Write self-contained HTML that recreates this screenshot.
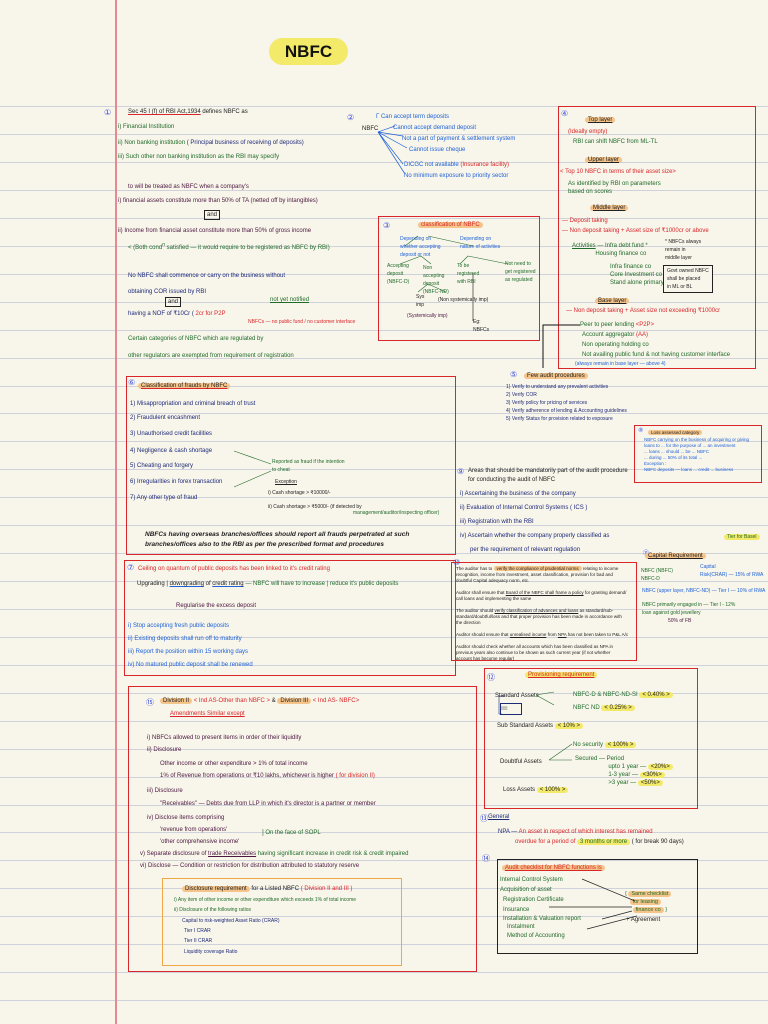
<!DOCTYPE html>
<html><head><meta charset="utf-8"><style>
html,body{margin:0;padding:0}
body{width:768px;height:1024px;position:relative;overflow:hidden;font-family:"Liberation Sans",sans-serif;background-color:#f8f5ea;}
.ln{position:absolute;left:0;width:768px;height:1px;background:#cfd1db}
.margin{position:absolute;left:115px;top:0;width:2px;height:1024px;background:#e58a93}
.pill{position:absolute;left:269px;top:38px;width:79px;height:27px;border-radius:14px;background:#f3ea6a;font-weight:bold;font-size:17px;text-align:center;line-height:27px;color:#111}
.t{position:absolute;font-size:6px;white-space:nowrap;line-height:8px}
.m{color:#4a1740}.g{color:#1f6b2a}.b{color:#1e62d8}.r{color:#d8262a}.n{color:#1d2a7a}.k{color:#222}
.box{position:absolute;border:1.5px solid #d8262a}
.hl{background:#f4c48a;border-radius:4px;padding:0 3px}
.hy{background:#f3ea6a;border-radius:4px;padding:0 3px}
.num{position:absolute;font-size:8px;color:#3b4fe0}
</style></head><body>
<div class="ln" style="top:106px"></div><div class="ln" style="top:134px"></div><div class="ln" style="top:162px"></div><div class="ln" style="top:190px"></div><div class="ln" style="top:218px"></div><div class="ln" style="top:246px"></div><div class="ln" style="top:274px"></div><div class="ln" style="top:302px"></div><div class="ln" style="top:330px"></div><div class="ln" style="top:358px"></div><div class="ln" style="top:386px"></div><div class="ln" style="top:413px"></div><div class="ln" style="top:441px"></div><div class="ln" style="top:469px"></div><div class="ln" style="top:497px"></div><div class="ln" style="top:525px"></div><div class="ln" style="top:553px"></div><div class="ln" style="top:581px"></div><div class="ln" style="top:609px"></div><div class="ln" style="top:637px"></div><div class="ln" style="top:665px"></div><div class="ln" style="top:693px"></div><div class="ln" style="top:721px"></div><div class="ln" style="top:749px"></div><div class="ln" style="top:777px"></div><div class="ln" style="top:805px"></div><div class="ln" style="top:832px"></div><div class="ln" style="top:860px"></div><div class="ln" style="top:888px"></div><div class="ln" style="top:916px"></div><div class="ln" style="top:944px"></div><div class="ln" style="top:972px"></div><div class="ln" style="top:1000px"></div>
<div class="margin"></div>
<div class="pill">NBFC</div>

<div class="num" style="left:104px;top:108px">①</div>
<div class="t k" style="left:128px;top:108px"><u style="text-decoration-color:#d8262a">Sec 45 I (f) of RBI Act,1934</u> defines NBFC as</div>
<div class="t g" style="left:118px;top:123px">i) Financial Institution</div>
<div class="t g" style="left:118px;top:139px">ii) Non banking institution <span class="n">( Principal business of receiving of deposits)</span></div>
<div class="t g" style="left:118px;top:153px">iii) Such other non banking institution as the RBI may specify</div>
<div class="t m" style="left:128px;top:183px">to will be treated as NBFC when a company's</div>
<div class="t m" style="left:118px;top:197px">i) financial assets constitute more than 50% of TA (netted off by intangibles)</div>
<div class="t k" style="left:204px;top:210px;border:1px solid #222;padding:0 2px">and</div>
<div class="t m" style="left:118px;top:227px">ii) Income from financial asset constitute more than 50% of gross income</div>
<div class="t g" style="left:128px;top:241px">&lt; (Both cond<sup>n</sup> satisfied — it would require to be registered as NBFC by RBI)</div>
<div class="t n" style="left:128px;top:272px">No NBFC shall commence or carry on the business without</div>
<div class="t n" style="left:128px;top:288px">obtaining COR issued by RBI</div>
<div class="t k" style="left:165px;top:297px;border:1px solid #222;padding:0 2px">and</div>
<div class="t g" style="left:270px;top:296px"><u>not yet notified</u></div>
<div class="t n" style="left:128px;top:310px">having a NOF of ₹10Cr ( <span class="r">2cr for P2P</span></div>
<div class="t r" style="left:248px;top:318px;font-size:5px">NBFCs — no public fund / no customer interface</div>
<div class="t g" style="left:128px;top:335px">Certain categories of NBFC which are regulated by</div>
<div class="t g" style="left:128px;top:352px">other regulators are exempted from requirement of registration</div>

<div class="num" style="left:347px;top:113px">②</div>
<div class="t b" style="left:376px;top:113px">Γ Can accept term deposits</div>
<div class="t k" style="left:362px;top:125px">NBFC</div>
<div class="t b" style="left:393px;top:124px">Cannot accept demand deposit</div>
<div class="t b" style="left:402px;top:135px">Not a part of payment &amp; settlement system</div>
<div class="t b" style="left:409px;top:146px">Cannot issue cheque</div>
<div class="t b" style="left:404px;top:161px">DICGC not available <span class="r">(Insurance facility)</span></div>
<div class="t b" style="left:404px;top:172px">No minimum exposure to priority sector</div>
<svg style="position:absolute;left:375px;top:120px" width="35" height="60"><g stroke="#1e62d8" stroke-width=".7" fill="none"><path d="M3 12 L20 6 M3 12 L28 16 M3 12 L32 28 M3 12 L28 44 M3 12 L30 54"/></g></svg>

<div class="box" style="left:378px;top:216px;width:160px;height:123px"></div>
<div class="num" style="left:383px;top:221px">③</div>
<div class="t r" style="left:418px;top:221px"><span class="hl">classification of NBFC</span></div>
<div class="t b" style="left:400px;top:235px;font-size:5px">Depending on<br>whether accepting<br>deposit or not</div>
<div class="t b" style="left:460px;top:235px;font-size:5px">Depending on<br>nature of activities</div>
<div class="t g" style="left:387px;top:262px;font-size:5px">Accepting<br>deposit<br>(NBFC-D)</div>
<div class="t g" style="left:423px;top:264px;font-size:5px">Non<br>accepting<br>deposit<br>(NBFC-ND)</div>
<div class="t g" style="left:457px;top:262px;font-size:5px">To be<br>registered<br>with RBI</div>
<div class="t g" style="left:505px;top:260px;font-size:5px">Not need to<br>get registered<br>as regulated</div>
<div class="t k" style="left:416px;top:293px;font-size:5px">Sys<br>imp</div>
<div class="t k" style="left:438px;top:296px;font-size:5px">(Non systemically imp)</div>
<div class="t m" style="left:407px;top:312px;font-size:5px">(Systemically imp)</div>
<div class="t k" style="left:473px;top:318px;font-size:5px">Eg:<br>NBFCs</div>
<svg style="position:absolute;left:378px;top:216px" width="160" height="123"><g stroke="#1f6b2a" stroke-width=".6" fill="none"><path d="M40 20 L27 30 M50 20 L95 30 M43 40 L22 48 M43 40 L53 48 M90 40 L82 48 M90 40 L130 48 M50 68 L40 76 M50 68 L68 76"/><path d="M95 57 L95 105" stroke="#111"/></g></svg>

<div class="box" style="left:558px;top:106px;width:196px;height:261px"></div>
<div class="num" style="left:561px;top:109px">④</div>
<div class="t k" style="left:585px;top:116px"><span class="hl"><u>Top layer</u></span></div>
<div class="t r" style="left:568px;top:128px">(Ideally empty)</div>
<div class="t g" style="left:573px;top:138px">RBI can shift NBFC from ML-TL</div>
<div class="t k" style="left:585px;top:156px"><span class="hl"><u>Upper layer</u></span></div>
<div class="t r" style="left:560px;top:168px">&lt; Top 10 NBFC in terms of their asset size&gt;</div>
<div class="t g" style="left:568px;top:180px">As identified by RBI on parameters<br>based on scores</div>
<div class="t k" style="left:590px;top:204px"><span class="hl"><u>Middle layer</u></span></div>
<div class="t r" style="left:562px;top:217px">— Deposit taking</div>
<div class="t r" style="left:562px;top:227px">— Non deposit taking + Asset size of ₹1000cr or above</div>
<div class="t g" style="left:572px;top:242px"><u>Activities</u> — Infra debt fund *<br>&nbsp;&nbsp;&nbsp;&nbsp;&nbsp;&nbsp;&nbsp;&nbsp;&nbsp;&nbsp;&nbsp;&nbsp;&nbsp;&nbsp;Housing finance co</div>
<div class="t k" style="left:665px;top:238px;font-size:5px">* NBFCs always<br>remain in<br>middle layer</div>
<div class="t g" style="left:610px;top:263px">Infra finance co<br>Core Investment co<br>Stand alone primary dealer *</div>
<div class="t k" style="left:663px;top:265px;font-size:5px;border:1px solid #222;padding:1px 3px;background:#f8f5ea">Govt owned NBFC<br>shall be placed<br>in ML or BL</div>
<div class="t k" style="left:595px;top:297px"><span class="hl"><u>Base layer</u></span></div>
<div class="t r" style="left:566px;top:307px">— Non deposit taking + Asset size not exceeding ₹1000cr</div>
<div class="t g" style="left:580px;top:321px">Peer to peer lending <span class="r">&lt;P2P&gt;</span></div>
<div class="t g" style="left:582px;top:331px">Account aggregator <span class="r">(AA)</span></div>
<div class="t g" style="left:582px;top:341px">Non operating holding co</div>
<div class="t g" style="left:582px;top:351px">Not availing public fund &amp; not having customer interface</div>
<div class="t b" style="left:575px;top:360px;font-size:5px">(always remain in base layer — above 4)</div>
<svg style="position:absolute;left:540px;top:320px" width="45" height="50"><path d="M40 5 L3 5 L3 48" stroke="#111" fill="none" stroke-width="1"/></svg>

<div class="num" style="left:510px;top:370px">⑤</div>
<div class="t k" style="left:524px;top:372px"><span class="hl">Few audit procedures</span></div>
<div class="t n" style="left:506px;top:383px;font-size:5px">1) Verify to understand any prevalent activities<br>2) Verify COR<br>3) Verify policy for pricing of services<br>4) Verify adherence of lending &amp; Accounting guidelines<br>5) Verify Status for provision related to exposure</div>

<div class="box" style="left:126px;top:376px;width:328px;height:177px"></div>
<div class="num" style="left:128px;top:378px">⑥</div>
<div class="t k" style="left:138px;top:382px"><span class="hl"><u style="text-decoration-color:#d8262a">Classification of frauds by NBFC</u></span></div>
<div class="t n" style="left:130px;top:400px">1) Misappropriation and criminal breach of trust</div>
<div class="t n" style="left:130px;top:414px">2) Fraudulent encashment</div>
<div class="t n" style="left:130px;top:430px">3) Unauthorised credit facilities</div>
<div class="t n" style="left:130px;top:447px">4) Negligence &amp; cash shortage</div>
<div class="t n" style="left:130px;top:462px">5) Cheating and forgery</div>
<div class="t n" style="left:130px;top:478px">6) Irregularities in forex transaction</div>
<div class="t n" style="left:130px;top:494px">7) Any other type of fraud</div>
<div class="t g" style="left:272px;top:458px;font-size:5px">Reported as fraud if the intention<br>to cheat</div>
<div class="t k" style="left:275px;top:478px;font-size:5px"><u>Exception</u></div>
<div class="t k" style="left:268px;top:489px;font-size:5px">i) Cash shortage &gt; ₹10000/-</div>
<div class="t k" style="left:268px;top:503px;font-size:5px">ii) Cash shortage &gt; ₹5000/- (if detected by</div>
<div class="t g" style="left:353px;top:509px;font-size:5px">management/auditor/inspecting officer)</div>
<svg style="position:absolute;left:126px;top:376px" width="330" height="180"><path d="M108 75 L145 88 M108 111 L145 95" stroke="#1f6b2a" stroke-width=".6" fill="none"/></svg>
<div class="t k" style="left:145px;top:530px;font-size:6.5px;font-weight:bold;font-style:italic;line-height:10px">NBFCs having overseas branches/offices should report all frauds perpetrated at such<br>branches/offices also to the RBI as per the prescribed format and procedures</div>

<div class="box" style="left:124px;top:560px;width:330px;height:114px"></div>
<div class="num" style="left:127px;top:563px">⑦</div>
<div class="t r" style="left:138px;top:565px">Ceiling on quantum of public deposits has been linked to it's credit rating</div>
<div class="t k" style="left:137px;top:580px">Upgrading | <u style="text-decoration-color:#1e62d8">downgrading</u> of <u style="text-decoration-color:#1e62d8">credit rating</u> <span class="g">— NBFC will have to increase | reduce it's public deposits</span></div>
<div class="t m" style="left:176px;top:602px">Regularise the excess deposit</div>
<div class="t b" style="left:128px;top:622px">i) Stop accepting fresh public deposits</div>
<div class="t b" style="left:128px;top:635px">ii) Existing deposits shall run off to maturity</div>
<div class="t b" style="left:128px;top:648px">iii) Report the position within 15 working days</div>
<div class="t b" style="left:128px;top:661px">iv) No matured public deposit shall be renewed</div>

<div class="num" style="left:638px;top:427px;font-size:6px">⑧</div>
<div class="box" style="left:634px;top:425px;width:126px;height:56px"></div>
<div class="t k" style="left:648px;top:429px;font-size:4.5px"><span class="hl">Loss assessed category</span></div>
<div class="t b" style="left:644px;top:437px;font-size:4.5px;line-height:6px">NBFC carrying on the business of acquiring or giving<br>loans to ... for the purpose of ... an investment<br>... loans ... should ... be ... NBFC<br>... during ... 50% of its total ...<br>Exception :<br>NBFC deposits — loans ... credit ... business</div>

<div class="num" style="left:457px;top:467px">⑨</div>
<div class="t k" style="left:468px;top:467px;line-height:9px">Areas that should be mandatorily part of the audit procedure<br>for conducting the audit of NBFC</div>
<div class="t n" style="left:460px;top:490px">i) Ascertaining the business of the company</div>
<div class="t n" style="left:460px;top:504px">ii) Evaluation of Internal Control Systems ( ICS )</div>
<div class="t n" style="left:460px;top:518px">iii) Registration with the RBI</div>
<div class="t n" style="left:460px;top:532px">iv) Ascertain whether the company properly classified as</div>
<div class="t n" style="left:470px;top:546px">per the requirement of relevant regulation</div>

<div class="num" style="left:453px;top:558px">⑩</div>
<div class="box" style="left:451px;top:562px;width:184px;height:97px"></div>
<div class="t k" style="left:456px;top:566px;font-size:4.5px;line-height:6px">The auditor has to <span class="hl">verify the compliance of prudential norms</span> relating to income<br>recognition, income from investment, asset classification, provision for bad and<br>doubtful Capital adequacy norm, etc.<br><br>Auditor shall ensure that <u>Board of the NBFC shall frame a policy</u> for granting demand/<br>call loans and implementing the same<br><br>The auditor should <u>verify classification of advances and loans</u> as standard/sub-<br>standard/doubtful/loss and that proper provision has been made in accordance with<br>the direction<br><br>Auditor should ensure that <u>unrealised income</u> from <u>NPA</u> has not been taken to P&amp;L A/c<br><br>Auditor should check whether all accounts which has been classified as NPA in<br>previous years also continue to be shown as such current year (if not whether<br>account has become regular)</div>

<div class="num" style="left:643px;top:548px;font-size:6px">⑪</div>
<div class="t k" style="left:645px;top:552px"><span class="hl"><u>Capital Requirement</u></span></div>
<div class="t g" style="left:724px;top:533px;font-size:5px"><span class="hy">Tier for Basel</span></div>
<div class="t g" style="left:641px;top:567px;font-size:5px">NBFC (NBFC)<br>NBFC-D</div>
<div class="t b" style="left:700px;top:563px;font-size:5px">Capital<br>Risk(CRAR) — 15% of RWA</div>
<div class="t b" style="left:642px;top:587px;font-size:5px">NBFC (upper layer, NBFC-ND) — Tier I — 10% of RWA</div>
<div class="t g" style="left:642px;top:601px;font-size:5px">NBFC primarily engaged in — Tier I - 12%<br>loan against gold jewellery</div>
<div class="t m" style="left:668px;top:617px;font-size:5px">50% of FB</div>

<div class="box" style="left:484px;top:668px;width:212px;height:139px"></div>
<div class="num" style="left:487px;top:672px">⑫</div>
<div class="t r" style="left:525px;top:671px"><span class="hy"><u>Provisioning requirement</u></span></div>
<div class="t k" style="left:495px;top:692px">Standard Assets</div>
<div class="t g" style="left:573px;top:691px">NBFC-D &amp; NBFC-ND-SI <span class="hy k">&lt; 0.40% &gt;</span></div>
<div class="t g" style="left:573px;top:704px">NBFC ND <span class="hy k">&lt; 0.25% &gt;</span></div>
<div class="t k" style="left:500px;top:703px;width:20px;height:10px;border:1px solid #1d2a7a;font-size:3px">▒▒▒</div>
<div class="t k" style="left:497px;top:722px">Sub Standard Assets <span class="hy">&lt; 10% &gt;</span></div>
<div class="t g" style="left:573px;top:741px">No security <span class="hy k">&lt; 100% &gt;</span></div>
<div class="t k" style="left:500px;top:758px">Doubtful Assets</div>
<div class="t g" style="left:575px;top:755px">Secured — Period<br>&nbsp;&nbsp;&nbsp;&nbsp;&nbsp;&nbsp;&nbsp;&nbsp;&nbsp;&nbsp;&nbsp;&nbsp;&nbsp;&nbsp;&nbsp;&nbsp;&nbsp;&nbsp;&nbsp;&nbsp;upto 1 year — <span class="hy k">&lt;20%&gt;</span><br>&nbsp;&nbsp;&nbsp;&nbsp;&nbsp;&nbsp;&nbsp;&nbsp;&nbsp;&nbsp;&nbsp;&nbsp;&nbsp;&nbsp;&nbsp;&nbsp;&nbsp;&nbsp;&nbsp;&nbsp;1-3 year — <span class="hy k">&lt;30%&gt;</span><br>&nbsp;&nbsp;&nbsp;&nbsp;&nbsp;&nbsp;&nbsp;&nbsp;&nbsp;&nbsp;&nbsp;&nbsp;&nbsp;&nbsp;&nbsp;&nbsp;&nbsp;&nbsp;&nbsp;&nbsp;&gt;3 year — <span class="hy k">&lt;50%&gt;</span></div>
<div class="t k" style="left:503px;top:786px">Loss Assets <span class="hy">&lt; 100% &gt;</span></div>
<svg style="position:absolute;left:484px;top:668px" width="212" height="140"><g stroke="#1f6b2a" stroke-width=".6" fill="none"><path d="M52 27 L70 24 M52 27 L70 37 M65 92 L88 76 M65 92 L88 92"/><path d="M22 28 L15 28 L15 46 L18 46" stroke="#1d2a7a"/></g></svg>

<div class="num" style="left:480px;top:813px">⑬</div>
<div class="t n" style="left:488px;top:813px"><u>General</u></div>
<div class="t n" style="left:498px;top:828px">NPA — <span class="r">An asset in respect of which interest has remained</span></div>
<div class="t r" style="left:515px;top:838px">overdue for a period of <span class="hy g">3 months or more</span> <span class="k">( for break 90 days)</span></div>

<div class="num" style="left:482px;top:853px">⑭</div>
<div style="position:absolute;left:497px;top:859px;width:199px;height:93px;border:1.5px solid #222"></div>
<div class="t r" style="left:502px;top:864px"><span class="hl"><u>Audit checklist for NBFC functions is</u></span></div>
<div class="t g" style="left:500px;top:876px">Internal Control System</div>
<div class="t g" style="left:500px;top:886px">Acquisition of asset</div>
<div class="t g" style="left:503px;top:896px">Registration Certificate</div>
<div class="t g" style="left:503px;top:906px">Insurance</div>
<div class="t g" style="left:503px;top:915px">Installation &amp; Valuation report</div>
<div class="t g" style="left:507px;top:923px">Instalment</div>
<div class="t g" style="left:507px;top:932px">Method of Accounting</div>
<div class="t g" style="left:625px;top:890px;font-size:5.5px;line-height:8px">{ <span class="hl">Same checklist</span><br>&nbsp;&nbsp;&nbsp;<span class="hl">for leasing</span><br>&nbsp;&nbsp;&nbsp;&nbsp;&nbsp;<span class="hl">finance co</span> }</div>
<div class="t k" style="left:626px;top:916px">+ Agreement</div>
<svg style="position:absolute;left:497px;top:859px" width="199" height="93"><g stroke="#222" stroke-width=".7" fill="none"><path d="M85 20 L138 42 M52 48 L135 48 M105 60 L135 52 M90 70 L140 57"/></g></svg>

<div class="box" style="left:128px;top:686px;width:347px;height:284px"></div>
<div class="num" style="left:146px;top:697px">⑮</div>
<div class="t k" style="left:160px;top:697px"><span class="hl">Division II</span> <span class="r">&lt; Ind AS-Other than NBFC &gt;</span> &amp; <span class="hl">Division III</span> <span class="r">&lt; Ind AS- NBFC&gt;</span></div>
<div class="t r" style="left:170px;top:710px"><u>Amendments Similar except</u></div>
<div class="t m" style="left:147px;top:734px">i) NBFCs allowed to present items in order of their liquidity</div>
<div class="t m" style="left:147px;top:746px">ii) Disclosure</div>
<div class="t m" style="left:160px;top:760px">Other income or other expenditure &gt; 1% of total income</div>
<div class="t m" style="left:160px;top:772px">1% of Revenue from operations or ₹10 lakhs, whichever is higher <span class="r">( for division II)</span></div>
<div class="t m" style="left:147px;top:787px">iii) Disclosure</div>
<div class="t m" style="left:160px;top:800px">"Receivables" — Debts due from LLP in which it's director is a partner or member</div>
<div class="t m" style="left:147px;top:814px">iv) Disclose items comprising</div>
<div class="t m" style="left:160px;top:826px">'revenue from operations'</div>
<div class="t m" style="left:160px;top:838px">'other comprehensive income'</div>
<div class="t g" style="left:262px;top:829px">] On the face of SOPL</div>
<div class="t m" style="left:140px;top:850px">v) Separate disclosure of <u>trade Receivables</u> <span class="g">having significant increase in credit risk &amp; credit impaired</span></div>
<div class="t m" style="left:140px;top:862px">vi) Disclose — Condition or restriction for distribution attributed to statutory reserve</div>

<div style="position:absolute;left:162px;top:878px;width:238px;height:86px;border:1.5px solid #f0a844"></div>
<div class="t k" style="left:182px;top:885px"><span class="hl">Disclosure requirement</span> for a Listed NBFC <span class="r">( Division II and III )</span></div>
<div class="t g" style="left:174px;top:896px;font-size:5px">i) Any item of other income or other expenditure which exceeds 1% of total income</div>
<div class="t g" style="left:174px;top:906px;font-size:5px">ii) Disclosure of the following ratios</div>
<div class="t n" style="left:182px;top:917px;font-size:5px">Capital to risk-weighted Asset Ratio (CRAR)</div>
<div class="t n" style="left:184px;top:927px;font-size:5px">Tier I CRAR</div>
<div class="t n" style="left:184px;top:937px;font-size:5px">Tier II CRAR</div>
<div class="t n" style="left:184px;top:948px;font-size:5px">Liquidity coverage Ratio</div>
</body></html>
